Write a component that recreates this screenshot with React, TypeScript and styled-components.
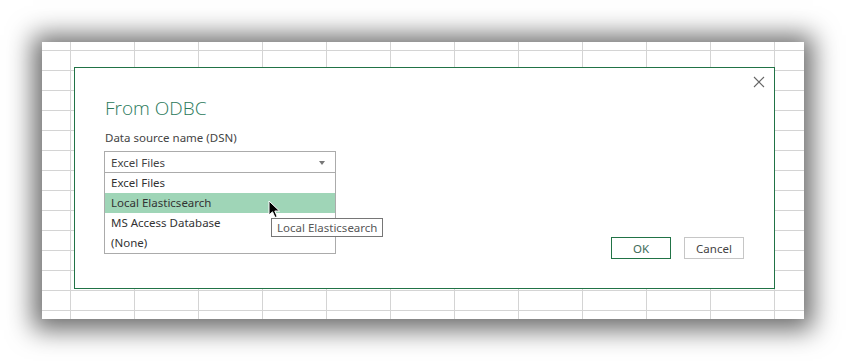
import React from "react";
import styled, { createGlobalStyle } from "styled-components";

const GlobalStyle = createGlobalStyle`
  html, body { margin: 0; padding: 0; background: #ffffff; }
  body { font-family: "Noto Sans", "Open Sans", sans-serif; }
  * { box-sizing: border-box; }
`;

const Page = styled.div`
  width: 846px;
  height: 361px;
  padding: 42px 0 0 42px;
  overflow: hidden;
`;

const Sheet = styled.div`
  width: 762px;
  height: 277px;
  background-color: #ffffff;
  background-image:
    linear-gradient(to right, #d4d4d4 1px, transparent 1px),
    linear-gradient(to bottom, #d4d4d4 1px, transparent 1px);
  background-size: 64px 20px;
  background-position: 28px 8px;
  box-shadow: 0 2px 24px 9px rgba(0, 0, 0, 0.58);
  padding: 25px 0 0 32px;
`;

const Dialog = styled.div`
  position: relative;
  width: 701px;
  height: 222px;
  background: #ffffff;
  border: 1px solid #217346;
  display: flex;
  flex-direction: column;
`;

const TopBar = styled.div`
  display: flex;
  justify-content: flex-end;
  padding: 7px 9px 0 0;
  height: 27px;
`;

const CloseButton = styled.button`
  width: 13px;
  height: 13px;
  padding: 0;
  border: none;
  background: transparent;
  display: flex;
  align-items: center;
  justify-content: center;
  cursor: pointer;
`;

const Body = styled.div`
  padding-left: 29px;
  display: flex;
  flex-direction: column;
`;

const Title = styled.h1`
  margin: 0;
  font-family: "Open Sans", "Noto Sans", sans-serif;
  font-weight: 300;
  font-size: 19px;
  line-height: 26px;
  color: #2b7a5b;
  padding-left: 1px;
`;

const Label = styled.div`
  margin-top: 9px;
  font-size: 11.5px;
  line-height: 16px;
  color: #444444;
  padding-left: 1px;
`;

const SelectWrap = styled.div`
  position: relative;
  margin-top: 5px;
  width: 232px;
`;

const SelectBox = styled.div`
  height: 22px;
  border: 1px solid #ababab;
  display: flex;
  align-items: center;
  justify-content: space-between;
  padding: 0 10px 0 6px;
  font-size: 11.5px;
  color: #444444;
  background: #ffffff;
`;

const Caret = styled.span`
  width: 0;
  height: 0;
  border-left: 3.5px solid transparent;
  border-right: 3.5px solid transparent;
  border-top: 4px solid #777777;
  margin-top: 1px;
`;

const List = styled.ul`
  position: absolute;
  left: 0;
  top: 21px;
  width: 232px;
  margin: 0;
  padding: 0;
  list-style: none;
  border: 1px solid #ababab;
  background: #ffffff;
  z-index: 2;
`;

const Item = styled.li<{ $active?: boolean }>`
  height: 20px;
  line-height: 20px;
  padding-left: 6px;
  font-size: 11.5px;
  color: #333333;
  background: ${(p) => (p.$active ? "#9fd5b7" : "transparent")};
`;

const Tooltip = styled.div`
  position: absolute;
  left: 196px;
  top: 150px;
  height: 19px;
  padding: 0 5px;
  border: 1px solid #767676;
  background: #ffffff;
  font-size: 11.5px;
  line-height: 17px;
  color: #575757;
  white-space: nowrap;
  z-index: 3;
`;

const Pointer = styled.svg`
  position: absolute;
  left: 193px;
  top: 132px;
  z-index: 4;
`;

const Footer = styled.div`
  margin-top: auto;
  display: flex;
  justify-content: flex-end;
  gap: 13px;
  padding: 0 30px 29px 0;
`;

const Button = styled.button<{ $primary?: boolean }>`
  width: 60px;
  height: 22px;
  padding: 0;
  background: #ffffff;
  border: 1px solid ${(p) => (p.$primary ? "#217346" : "#c6c6c6")};
  font-family: "Noto Sans", sans-serif;
  font-size: 11.5px;
  color: ${(p) => (p.$primary ? "#3d6b58" : "#444444")};
  cursor: pointer;
`;

const items = ["Excel Files", "Local Elasticsearch", "MS Access Database", "(None)"];

export default function App() {
  return (
    <>
      <GlobalStyle />
      <Page>
        <Sheet>
          <Dialog>
            <TopBar>
              <CloseButton aria-label="Close">
                <svg width="12" height="12" viewBox="0 0 12 12">
                  <path d="M1 1 L11 11 M11 1 L1 11" stroke="#666666" strokeWidth="1.1" fill="none" />
                </svg>
              </CloseButton>
            </TopBar>
            <Body>
              <Title>From ODBC</Title>
              <Label>Data source name (DSN)</Label>
              <SelectWrap>
                <SelectBox>
                  <span>Excel Files</span>
                  <Caret />
                </SelectBox>
                <List>
                  {items.map((it, i) => (
                    <Item key={it} $active={i === 1}>
                      {it}
                    </Item>
                  ))}
                </List>
              </SelectWrap>
            </Body>
            <Tooltip>Local Elasticsearch</Tooltip>
            <Pointer width="13" height="19" viewBox="0 0 13 19">
              <path
                d="M1 1 L1 15 L4.5 11.8 L7 17.5 L9.2 16.6 L6.8 11 L11.5 11 Z"
                fill="#000000"
                stroke="#ffffff"
                strokeWidth="1"
                strokeLinejoin="round"
              />
            </Pointer>
            <Footer>
              <Button $primary>OK</Button>
              <Button>Cancel</Button>
            </Footer>
          </Dialog>
        </Sheet>
      </Page>
    </>
  );
}
